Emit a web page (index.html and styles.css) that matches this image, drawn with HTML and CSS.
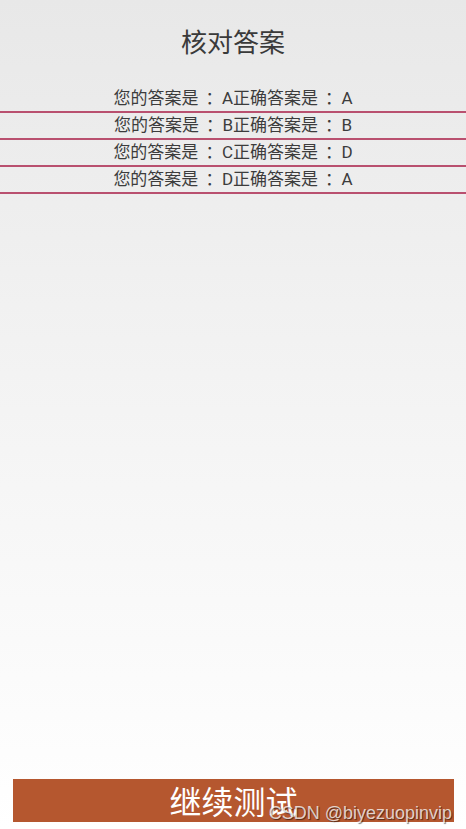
FILE: index.html
```html
<!DOCTYPE html>
<html lang="zh">
<head>
<meta charset="UTF-8">
<meta name="viewport" content="width=device-width, initial-scale=1.0">
<title>核对答案</title>
<link rel="stylesheet" href="styles.css">
</head>
<body>
<div class="page">
    <h2 class="title">核对答案</h2>
    <ul class="answers">
        <li>您的答案是<span class="colon">：</span>A正确答案是<span class="colon">：</span>A</li>
        <li>您的答案是<span class="colon">：</span>B正确答案是<span class="colon">：</span>B</li>
        <li>您的答案是<span class="colon">：</span>C正确答案是<span class="colon">：</span>D</li>
        <li>您的答案是<span class="colon">：</span>D正确答案是<span class="colon">：</span>A</li>
    </ul>
    <div class="footer">
        <button class="next">继续测试</button>
        <span class="mark">CSDN @biyezuopinvip</span>
    </div>
</div>
</body>
</html>
```

FILE: styles.css
```css
body {
    margin: 0;
    padding: 0;
    font-family: "Noto Sans CJK SC", "Noto Sans", sans-serif;
    color: #333;
}

.page {
    height: 829px;
    display: flex;
    flex-direction: column;
    background: linear-gradient(to bottom, #e8e8e8 0%, #f3f3f3 45%, #ffffff 100%);
}

.title {
    margin: 0;
    padding-top: 23px;
    height: 86px;
    box-sizing: border-box;
    font-size: 26px;
    font-weight: normal;
    line-height: 36px;
    text-align: center;
    color: #3a3a3a;
}

.answers {
    list-style: none;
    margin: 0;
    padding: 0;
}

.answers li {
    height: 25px;
    line-height: 25px;
    font-family: Roboto, "Noto Sans CJK SC", sans-serif;
    font-size: 17px;
    text-align: center;
    color: #3c3c3c;
    border-bottom: 2px solid #b9506f;
}

/* centred colon with some air on both sides */
.colon {
    padding: 0 8px 0 7px;
    line-height: 0;
    font-family: "Noto Sans CJK TC", sans-serif;
    font-feature-settings: "halt";
}

.footer {
    margin-top: auto;
    padding: 0 12px 7px 13px;
    position: relative;
}

.next {
    display: block;
    width: 100%;
    height: 43px;
    border: none;
    padding: 0;
    background-color: #b5572f;
    color: #fff;
    font-family: "Noto Sans CJK SC", sans-serif;
    font-size: 32px;
    line-height: 43px;
    cursor: pointer;
}

.mark {
    position: absolute;
    right: 14px;
    bottom: 5px;
    font-family: "Liberation Sans", Arial, sans-serif;
    font-size: 18px;
    color: rgba(255, 255, 255, 0.75);
    text-shadow: 1px 1px 1px rgba(0, 0, 0, 0.55);
}
```
